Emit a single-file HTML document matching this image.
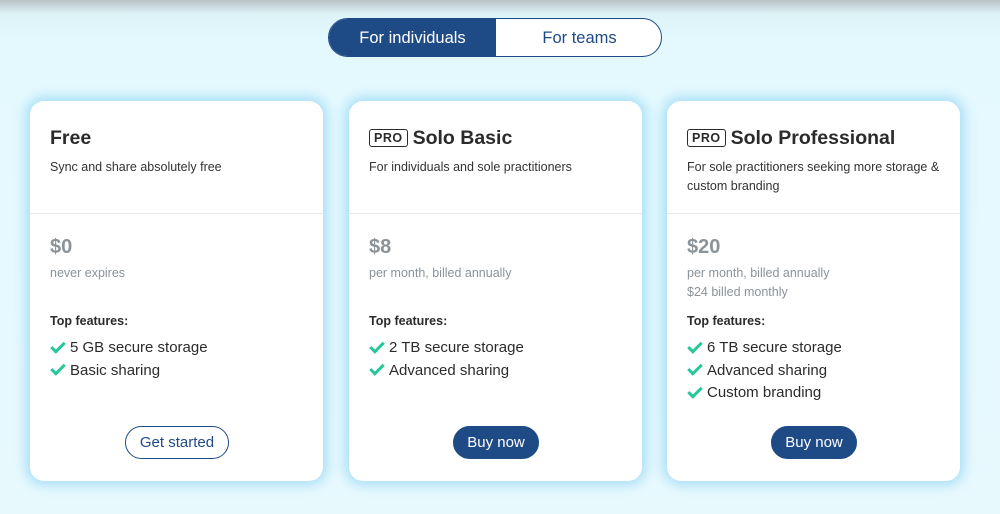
<!DOCTYPE html>
<html><head><style>
*{margin:0;padding:0;box-sizing:border-box}
body{width:1000px;height:514px;overflow:hidden;font-family:"Liberation Sans",sans-serif;background:linear-gradient(#b9c3c6 0px,#dcf3f8 14px,#e4f9fe 40px,#e8f9fe 100%);position:relative;color:#2b2b2b}
.tog{position:absolute;left:328px;top:18px;width:334px;height:39px;border:1px solid #1e4a85;border-radius:20px;overflow:hidden;display:flex;background:#fff}
.tog div{flex:0 0 167px;text-align:center;line-height:39px;font-size:16.5px;color:#1e4a85}
.tog .on{background:#1e4a85;color:#fff}
.card{position:absolute;top:101px;width:293px;height:380px;background:#fff;border-radius:14px;box-shadow:0 0 12px 4px rgba(150,215,245,.8)}
.hd{height:113px;border-bottom:1px solid #e6e9ec;padding:23px 20px 0}
h2{font-size:19.5px;font-weight:bold;color:#2b2b2b;display:flex;align-items:center;height:28px}
.pro{display:inline-block;border:1.5px solid #2b2b2b;border-radius:3px;font-size:12.5px;font-weight:bold;padding:0 4px;line-height:16px;margin-right:5px;letter-spacing:.5px}
.sub{font-size:12.5px;margin-top:6px;line-height:19px;color:#333}
.bd{padding:22px 20px 0}
.pr{font-size:20px;font-weight:bold;color:#8a939a;height:24px}
.ps{font-size:12.5px;color:#8a939a;line-height:19px;margin-top:4px}
.tf{position:absolute;top:213px;left:20px;font-size:12.5px;font-weight:bold}
ul{position:absolute;top:236px;left:20px;list-style:none;font-size:15px;line-height:22.5px}
li::before{content:"";display:inline-block;width:11px;height:5px;border-left:3px solid #27c79a;border-bottom:3px solid #27c79a;transform:rotate(-45deg);margin:0 5px 5px 1px;vertical-align:middle}
.btn{position:absolute;top:325px;height:33px;border-radius:17px;font-size:15px;line-height:31px;text-align:center}
.b1{left:95px;width:104px;border:1px solid #1e4a85;color:#1e4a85}
.b2{left:104px;width:86px;background:#1e4a85;color:#fff;border:1px solid #1e4a85}
</style></head><body>
<div class="tog"><div class="on">For individuals</div><div>For teams</div></div>

<div class="card" style="left:30px">
<div class="hd"><h2>Free</h2><div class="sub">Sync and share absolutely free</div></div>
<div class="bd"><div class="pr">$0</div><div class="ps">never expires</div></div>
<div class="tf">Top features:</div>
<ul><li>5 GB secure storage</li><li>Basic sharing</li></ul>
<div class="btn b1">Get started</div>
</div>

<div class="card" style="left:349px">
<div class="hd"><h2><span class="pro">PRO</span>Solo Basic</h2><div class="sub">For individuals and sole practitioners</div></div>
<div class="bd"><div class="pr">$8</div><div class="ps">per month, billed annually</div></div>
<div class="tf">Top features:</div>
<ul><li>2 TB secure storage</li><li>Advanced sharing</li></ul>
<div class="btn b2">Buy now</div>
</div>

<div class="card" style="left:667px">
<div class="hd"><h2><span class="pro">PRO</span>Solo Professional</h2><div class="sub">For sole practitioners seeking more storage &amp; custom branding</div></div>
<div class="bd"><div class="pr">$20</div><div class="ps">per month, billed annually<br>$24 billed monthly</div></div>
<div class="tf">Top features:</div>
<ul><li>6 TB secure storage</li><li>Advanced sharing</li><li>Custom branding</li></ul>
<div class="btn b2">Buy now</div>
</div>
</body></html>
